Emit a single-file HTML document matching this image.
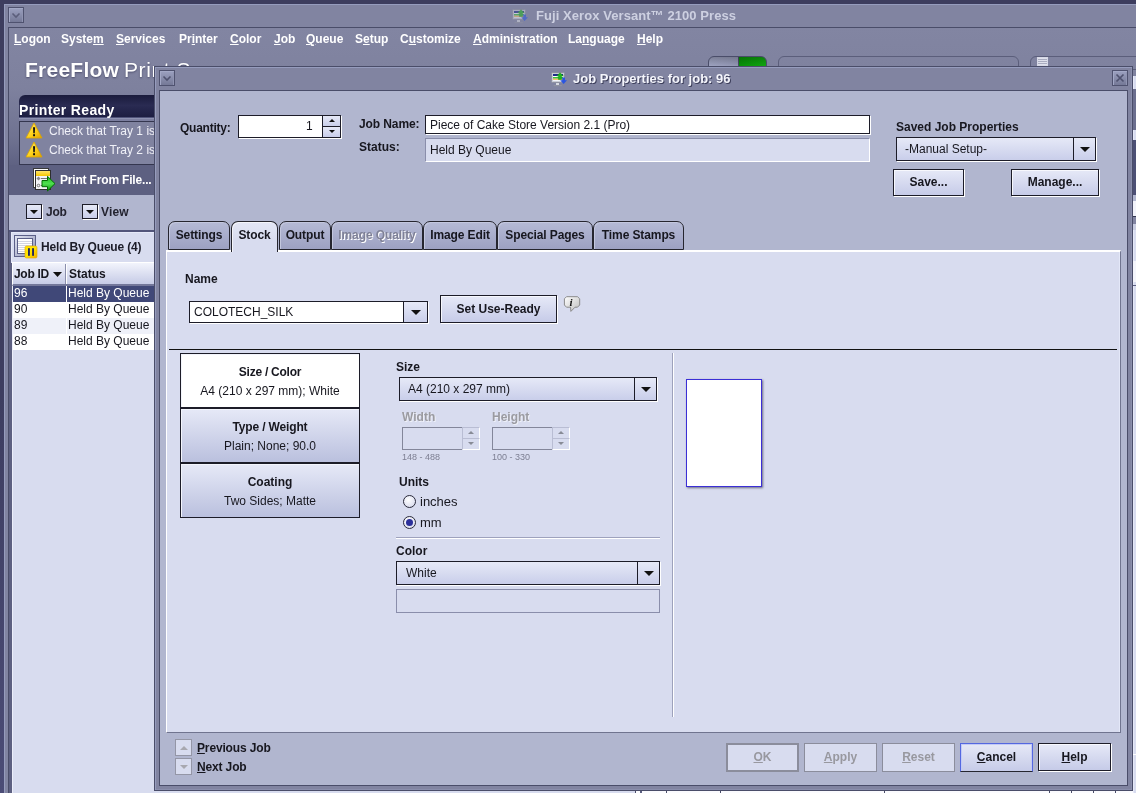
<!DOCTYPE html>
<html>
<head>
<meta charset="utf-8">
<title>Fuji Xerox Versant 2100 Press</title>
<style>
html,body{margin:0;padding:0;}
body{width:1136px;height:793px;overflow:hidden;background:linear-gradient(180deg,#3d3d5e 0,#3d3d60 50%,#4b4c76 100%);position:relative;
  font-family:"Liberation Sans","DejaVu Sans",sans-serif;font-size:12px;color:#17171f;}
#root{position:absolute;left:0;top:0;width:1136px;height:793px;will-change:transform;}
.a{position:absolute;box-sizing:border-box;}
.t{position:absolute;white-space:nowrap;line-height:14px;}
.b{font-weight:bold;}
u{text-decoration:underline;text-underline-offset:1px;}
/* main window */
#main{left:4px;top:4px;width:1140px;height:800px;background:#8184a1;border-left:1px solid #969cbd;border-top:1px solid #969cbd;}
#mainpane{left:8px;top:27px;width:1140px;height:780px;border-left:1px solid #4a4d69;border-top:1px solid #4a4d69;
  background:linear-gradient(180deg,#8285a2 0px,#7e819e 60px,#6f7291 110px,#5d6081 140px);}
.wbtn{width:16px;height:16px;border:1px solid #4f526f;background:linear-gradient(180deg,#9ca1c0,#757997);box-shadow:inset 1px 1px 0 #a3a8c6,inset -1px 0 0 #9094b2;}
.menu{top:32px;color:#fff;font-weight:bold;font-size:12px;}
/* dialog */
#dlg{left:154px;top:66px;width:979px;height:725px;background:#8184a1;border:1px solid #4a4d69;box-shadow:inset 1px 1px 0 #969cbd,inset -1px -1px 0 #8b8fad;}
#dlgpane{left:159px;top:90px;width:969px;height:696px;background:#b1b6cf;border:1px solid #4a4d69;}
#tabpane{left:166px;top:250px;width:955px;height:483px;background:#d8dcef;border-left:1px solid #fff;border-top:2px solid #fff;border-right:1px solid #70748f;border-bottom:1px solid #70748f;box-shadow:inset -1px 0 0 #e4e8f8;}
.lbl{font-weight:bold;font-size:12px;color:#17171f;}
.btn{border:1px solid #1c1c28;background:linear-gradient(180deg,#e6e9f7,#c6cbe8);box-shadow:1px 1px 0 #fff,inset 1px 1px 0 #f7f8fd;
  font-weight:bold;font-size:12px;text-align:center;}
.field{border:1px solid #1c1c28;background:#fff;box-shadow:1px 1px 0 #fff;}
.combo{border:1px solid #1c1c28;background:linear-gradient(180deg,#e6e9f7,#c9ceea);box-shadow:1px 1px 0 #fff;}
.dd{width:16px;height:15px;border:1px solid #1c1c28;background:linear-gradient(180deg,#e6e9f7,#c9ceea);box-shadow:1px 1px 0 #fff;}
.dd:after{content:"";position:absolute;left:3px;top:5px;border-left:4px solid transparent;border-right:4px solid transparent;border-top:4px solid #111;}
.tab{top:221px;height:29px;border:1px solid #26262f;border-radius:7px 7px 0 0;background:linear-gradient(180deg,#b5bad5,#9da1c2);box-shadow:inset 1px 1px 0 #c3c7de;font-weight:bold;font-size:12px;text-align:center;line-height:26px;letter-spacing:-0.1px;}

.c{text-align:center;}
.ro{border:1px solid #8a8eab;border-right-color:#fff;border-bottom-color:#fff;background:#d8dcef;}
.arr{position:absolute;right:0;top:0;bottom:0;border-left:1px solid #1c1c28;background:linear-gradient(180deg,#e6e9f7,#c9ceea);}
.arr:after{content:"";position:absolute;left:50%;top:50%;margin-left:-5px;margin-top:-2px;border-left:5px solid transparent;border-right:5px solid transparent;border-top:5px solid #111;}
.spin{border:1px solid #1c1c28;background:linear-gradient(180deg,#e6e9f7,#c9ceea);}
i.up,i.dn{position:absolute;left:50%;top:50%;margin-left:-3px;margin-top:-2px;border-left:3px solid transparent;border-right:3px solid transparent;}
i.up{border-bottom:3px solid #111;} i.dn{border-top:3px solid #111;}
i.up.g{border-bottom-color:#a8a8b0;margin-left:-4px;border-left-width:4px;border-right-width:4px;border-bottom-width:4px;} i.dn.g{border-top-color:#a8a8b0;margin-left:-4px;border-left-width:4px;border-right-width:4px;border-top-width:4px;}
.tab.sel{height:31px;border-bottom:none;background:linear-gradient(180deg,#e3e6f5,#d8dcef 60%);box-shadow:inset 1px 1px 0 #f4f5fb;}
.tab.dis{color:#7f8197;text-shadow:1px 1px 0 #fff;}
.sbtn{border:1px solid #1c1c28;background:linear-gradient(180deg,#e6e9f7,#bac0de);box-shadow:inset 1px 1px 0 #f3f5fc;}
.dl{color:#9b9ba1;text-shadow:1px 1px 0 #eef0f8;}
.dsp{border:1px solid #b9bdd3;border-right-color:#fff;border-bottom-color:#fff;}
i.g2{opacity:.4;}
.dfield{border:1px solid #8a8eab;border-right-color:#fff;border-bottom-color:#fff;}
.radio{width:13px;height:13px;border-radius:50%;border:1px solid #2a2a3a;background:radial-gradient(circle at 40% 35%,#fff,#d0d4ea);}
.radio.on:after{content:"";position:absolute;left:2px;top:2px;width:7px;height:7px;border-radius:50%;background:#2b2f9a;}
.sm{width:17px;height:17px;border:1px solid #9496a6;background:#d8dcef;}
.dbtn{border:1px solid #8b8d9c;background:#d8dcef;color:#98989f;font-weight:bold;font-size:12px;text-align:center;}
</style>
</head>
<body>
<div id="root">
<!-- MAIN WINDOW -->
<div class="a" id="main"></div>
<div class="a wbtn" style="left:8px;top:7px;"><svg width="14" height="14" style="position:absolute;left:0;top:0"><path d="M3.5 5.5 L7 9 L10.5 5.5" fill="none" stroke="#5b5e7b" stroke-width="1.6"/></svg></div>
<svg class="a" style="left:512px;top:9px;opacity:0.55;" width="17" height="15" viewBox="0 0 17 15"><rect x="0.5" y="0.5" width="13" height="10" rx="1" fill="#c9ccd6" stroke="#8e91a0"/><rect x="2" y="2" width="10" height="2" fill="#1e2a8a"/><rect x="2" y="4" width="10" height="1" fill="#fff"/><rect x="2" y="5" width="10" height="1.6" fill="#36c436"/><rect x="2" y="6.6" width="10" height="1.4" fill="#f5c06a"/><rect x="2" y="8" width="10" height="1" fill="#f2f3f8"/><rect x="5" y="11" width="3" height="2" fill="#d6d8e0"/><rect x="2.5" y="13" width="8.5" height="1.3" rx=".6" fill="#8e91a0"/><path d="M9 0.7 L12.3 4 L10.6 4 L10.6 7.6 L7.4 7.6 L7.4 4 L5.7 4 Z" fill="#1fb41f" stroke="#0e8a0e" stroke-width=".4"/><path d="M11.2 5.5 L14 5.5 L14 8.3 L16 8.3 L12.6 12 L9.2 8.3 L11.2 8.3 Z" fill="#2a55e0"/></svg>
<div class="t b" style="left:536px;top:9px;letter-spacing:0.07px;font-size:13px;color:#cdd0e1;">Fuji Xerox Versant™ 2100 Press</div>
<div class="a" id="mainpane"></div>
<div class="t menu" style="left:14px;"><u>L</u>ogon</div>
<div class="t menu" style="left:61px;">Syste<u>m</u></div>
<div class="t menu" style="left:116px;"><u>S</u>ervices</div>
<div class="t menu" style="left:179px;">Pr<u>i</u>nter</div>
<div class="t menu" style="left:230px;"><u>C</u>olor</div>
<div class="t menu" style="left:274px;"><u>J</u>ob</div>
<div class="t menu" style="left:306px;"><u>Q</u>ueue</div>
<div class="t menu" style="left:355px;">S<u>e</u>tup</div>
<div class="t menu" style="left:400px;">C<u>u</u>stomize</div>
<div class="t menu" style="left:473px;"><u>A</u>dministration</div>
<div class="t menu" style="left:568px;">La<u>n</u>guage</div>
<div class="t menu" style="left:637px;"><u>H</u>elp</div>

<!-- LEFT PANEL -->
<div class="t" id="logo" style="left:25px;top:56px;font-size:21px;line-height:27px;color:#fff;text-shadow:0 1px 2px rgba(40,40,70,.6);font-weight:bold;letter-spacing:0.25px;">FreeFlow</div>
<div class="t" id="logo2" style="left:124px;top:56px;font-size:21px;line-height:27px;color:#fff;text-shadow:0 1px 2px rgba(40,40,70,.6);letter-spacing:0.6px;">Print S</div>
<div class="a" style="left:19px;top:95px;width:140px;height:23px;background:linear-gradient(180deg,#1a1b3c 0,#2a2b52 45%,#23244a 70%,#1c1d40 100%);border-radius:6px 0 0 0;"></div>
<div class="a" style="left:19px;top:117px;width:140px;height:4px;background:#7c7fa0;border-top:1px solid #50537a;box-shadow:inset 0 1px 0 #8d91b0;"></div>
<div class="t b" style="left:19px;top:102px;font-size:14px;line-height:16px;color:#fff;letter-spacing:0.35px;">Printer Ready</div>
<div class="a" style="left:19px;top:121px;width:140px;height:44px;background:#8083a0;border:1px solid #34364f;"></div>
<svg class="a" style="left:25px;top:122px;" width="18" height="17" viewBox="0 0 18 17"><defs><linearGradient id="gw1" x1="0" y1="0" x2="1" y2="1"><stop offset="0" stop-color="#fff07a"/><stop offset=".55" stop-color="#ffd21a"/><stop offset="1" stop-color="#e0a000"/></linearGradient></defs><path d="M9 1 L17 16 L1 16 Z" fill="url(#gw1)" stroke="#d9a400" stroke-width=".8" stroke-linejoin="round"/><path d="M8 5.2h2.1l-.35 6h-1.4z" fill="#111"/><rect x="8.1" y="12.2" width="1.9" height="2" fill="#111"/></svg>
<svg class="a" style="left:25px;top:141px;" width="18" height="17" viewBox="0 0 18 17"><defs><linearGradient id="gw2" x1="0" y1="0" x2="1" y2="1"><stop offset="0" stop-color="#fff07a"/><stop offset=".55" stop-color="#ffd21a"/><stop offset="1" stop-color="#e0a000"/></linearGradient></defs><path d="M9 1 L17 16 L1 16 Z" fill="url(#gw2)" stroke="#d9a400" stroke-width=".8" stroke-linejoin="round"/><path d="M8 5.2h2.1l-.35 6h-1.4z" fill="#111"/><rect x="8.1" y="12.2" width="1.9" height="2" fill="#111"/></svg>
<div class="t" style="left:49px;top:124px;color:#f0f1f8;">Check that Tray 1 is</div>
<div class="t" style="left:49px;top:143px;color:#f0f1f8;">Check that Tray 2 is</div>
<div class="a" style="left:9px;top:165px;width:150px;height:30px;background:#5d6081;"></div>
<svg class="a" style="left:28px;top:166px;" width="30" height="28" viewBox="0 0 30 28"><defs><linearGradient id="gy" x1="0" y1="0" x2="0" y2="1"><stop offset="0" stop-color="#ffe46a"/><stop offset="1" stop-color="#f6c600"/></linearGradient><linearGradient id="gg" x1="0" y1="0" x2="0" y2="1"><stop offset="0" stop-color="#1bb81b"/><stop offset=".5" stop-color="#4fe04f"/><stop offset="1" stop-color="#0a960a"/></linearGradient></defs><rect x="5.5" y="2.5" width="15" height="19" fill="#fff" stroke="#3a3a3a"/><rect x="7.5" y="4.5" width="15" height="19" fill="#f4f4f6" stroke="#2e2e2e"/><rect x="8" y="5" width="14" height="5" fill="url(#gy)"/><rect x="9" y="11" width="3" height="3" fill="#8a8a8a" transform="rotate(45 10.5 12.5)"/><rect x="13" y="12" width="7" height="1" fill="#777"/><circle cx="10.5" cy="19.5" r="1.3" fill="none" stroke="#666" stroke-width=".9"/><rect x="13" y="19" width="3" height="1" fill="#777"/><path d="M14 14.5 L19.5 14.5 L19.5 10.3 L27 17.6 L19.5 25 L19.5 20.7 L14 20.7 Z" fill="url(#gg)" stroke="#056a05" stroke-width="1" stroke-linejoin="round"/></svg>
<div class="t b" style="left:60px;top:173px;color:#fff;letter-spacing:-0.18px;">Print From File...</div>
<div class="a" style="left:9px;top:195px;width:150px;height:35px;background:#b1b6cf;"></div>
<div class="a" style="left:9px;top:230px;width:150px;height:2px;background:#52557a;"></div>
<div class="a" style="left:9px;top:232px;width:3px;height:570px;background:#5d6081;"></div>
<div class="a" style="left:12px;top:263px;width:150px;height:540px;background:#d8dcef;border-left:1px solid #eceefa;"></div>
<div class="a" style="left:11px;top:232px;width:150px;height:31px;background:#d8dcef;border-left:1px solid #e6e9f8;border-top:1px solid #e6e9f8;"></div>
<div class="a dd" style="left:26px;top:204px;"></div>
<div class="a dd" style="left:82px;top:204px;"></div>
<div class="t b" style="left:46px;top:205px;font-size:12px;color:#23232f;letter-spacing:-0.2px;">Job</div>
<div class="t b" style="left:101px;top:205px;font-size:12px;color:#23232f;letter-spacing:0.15px;">View</div>
<svg class="a" style="left:10px;top:232px;" width="30" height="28" viewBox="0 0 30 28"><defs><linearGradient id="gf" x1="0" y1="0" x2="1" y2="1"><stop offset="0" stop-color="#e4e7f3"/><stop offset="1" stop-color="#8b90b3"/></linearGradient><linearGradient id="gp" x1="0" y1="0" x2="1" y2="1"><stop offset="0" stop-color="#ffe300"/><stop offset=".5" stop-color="#ffe300"/><stop offset="1" stop-color="#f0ac00"/></linearGradient></defs><rect x="4.5" y="3.5" width="21" height="21" fill="url(#gf)" stroke="#5c6088"/><rect x="7.5" y="6.5" width="15" height="15" fill="#fff" stroke="#5c6088"/><path d="M8 9.5h14M8 11.5h14M8 13.5h14M8 15.5h14M8 17.5h14M8 19.5h14" stroke="#d3d5e2" stroke-width="1"/><rect x="15" y="14" width="12" height="12" rx="1.5" fill="url(#gp)" stroke="#e8a800" stroke-width=".6"/><rect x="18" y="16.2" width="1.9" height="7.6" fill="#23265e"/><rect x="22.1" y="16.2" width="1.9" height="7.6" fill="#23265e"/></svg>
<div class="t b" style="left:41px;top:240px;color:#1c1c28;letter-spacing:-0.18px;">Held By Queue (4)</div>
<!-- table -->
<div class="a" style="left:12px;top:262px;width:148px;height:24px;background:linear-gradient(180deg,#f2f4fc,#c6cbe6);border-top:1px solid #fff;border-left:1px solid #fff;border-bottom:2px solid #73779a;"></div>
<div class="a" style="left:65px;top:264px;width:2px;height:20px;background:#fff;border-left:1px solid #8a8eab;"></div>
<div class="t b" style="left:14px;top:267px;letter-spacing:-0.3px;">Job ID</div>
<div class="t b" style="left:69px;top:267px;">Status</div>
<svg class="a" style="left:53px;top:272px;" width="10" height="6"><path d="M0 0 L9 0 L4.5 5 Z" fill="#111"/></svg>
<div class="a" style="left:13px;top:286px;width:148px;height:16px;background:#404878;"></div>
<div class="a" style="left:13px;top:302px;width:148px;height:16px;background:#fff;"></div>
<div class="a" style="left:13px;top:318px;width:148px;height:16px;background:#eff1f9;"></div>
<div class="a" style="left:13px;top:334px;width:148px;height:16px;background:#fff;"></div>
<div class="a" style="left:66px;top:286px;width:1px;height:64px;background:#fff;"></div>
<div class="t" style="left:14px;top:286px;color:#fff;">96</div><div class="t" style="left:68px;top:286px;color:#fff;">Held By Queue</div>
<div class="t" style="left:14px;top:302px;">90</div><div class="t" style="left:68px;top:302px;">Held By Queue</div>
<div class="t" style="left:14px;top:318px;">89</div><div class="t" style="left:68px;top:318px;">Held By Queue</div>
<div class="t" style="left:14px;top:334px;">88</div><div class="t" style="left:68px;top:334px;">Held By Queue</div>
<div class="a" style="left:708px;top:56px;width:59px;height:14px;border:1px solid #4a4d69;border-radius:6px 6px 0 0;background:linear-gradient(180deg,rgba(0,0,0,.22),rgba(0,0,0,0) 80%),linear-gradient(90deg,#a0a5c3 0,#9498b6 29px,#4a4d69 29px,#4a4d69 30px,#089408 30px,#10a810 100%);"></div>
<div class="a" style="left:778px;top:56px;width:241px;height:14px;border:1px solid #5b5e7b;border-radius:6px 6px 0 0;"></div>
<div class="a" style="left:1030px;top:56px;width:120px;height:14px;border:1px solid #5b5e7b;border-radius:6px 0 0 0;"></div>
<div class="a" style="left:1037px;top:57px;width:11px;height:9px;background:repeating-linear-gradient(180deg,#dfe1ec 0,#dfe1ec 1px,#a9acc0 1px,#a9acc0 2px);border:1px solid #d6d8e6;"></div>
<!-- peeking main content -->
<div class="a" style="left:155px;top:791px;width:481px;height:4px;background:#d8dcef;"></div>
<div class="a" style="left:636px;top:791px;width:500px;height:4px;background:#fbfbfe;"></div>
<div class="a" style="left:635px;top:791px;width:1px;height:3px;background:#4a4d69;"></div>
<div class="a" style="left:640px;top:791px;width:2px;height:3px;background:#5d6081;"></div>
<div class="a" style="left:666px;top:791px;width:1px;height:2px;background:#4a4d69;"></div>
<div class="a" style="left:720px;top:791px;width:1px;height:2px;background:#4a4d69;"></div>
<div class="a" style="left:884px;top:791px;width:1px;height:2px;background:#4a4d69;"></div>
<div class="a" style="left:1049px;top:791px;width:1px;height:2px;background:#4a4d69;"></div>
<div class="a" style="left:1071px;top:791px;width:1px;height:2px;background:#4a4d69;"></div>
<div class="a" style="left:1093px;top:791px;width:1px;height:2px;background:#4a4d69;"></div>
<div class="a" style="left:1115px;top:791px;width:1px;height:2px;background:#4a4d69;"></div>
<div class="a" style="left:1133px;top:76px;width:3px;height:720px;background:#d8dcef;border-left:1px solid #e6e9f8;"></div>
<div class="a" style="left:1133px;top:89px;width:3px;height:41px;background:#6b6e8e;"></div>
<div class="a" style="left:1133px;top:140px;width:3px;height:55px;background:#4d5075;"></div>
<div class="a" style="left:1133px;top:195px;width:3px;height:6px;background:#b1b6cf;"></div>
<div class="a" style="left:1133px;top:201px;width:3px;height:15px;background:#f2f3fa;"></div>
<div class="a" style="left:1133px;top:216px;width:3px;height:1px;background:#33364f;"></div>
<div class="a" style="left:1133px;top:217px;width:3px;height:7px;background:#8184a1;"></div>
<div class="a" style="left:1133px;top:224px;width:3px;height:6px;background:#c8cce0;"></div>
<div class="a" style="left:1133px;top:261px;width:3px;height:21px;background:#f4f5fb;"></div>
<div class="a" style="left:1133px;top:285px;width:3px;height:1px;background:#5d6081;"></div>
<div class="a" style="left:1133px;top:754px;width:3px;height:1px;background:#fff;"></div>

<!-- DIALOG -->
<div class="a" id="dlg"></div>
<div class="a wbtn" style="left:159px;top:70px;"><svg width="14" height="14" style="position:absolute;left:0;top:0"><path d="M3.5 5.5 L7 9 L10.5 5.5" fill="none" stroke="#4f526f" stroke-width="1.6"/></svg></div>
<div class="a wbtn" style="left:1112px;top:70px;"><svg width="14" height="14" style="position:absolute;left:0;top:0"><path d="M3.5 3.5 L10.5 10.5 M10.5 3.5 L3.5 10.5" fill="none" stroke="#4f526f" stroke-width="1.7"/></svg></div>
<svg class="a" style="left:551px;top:72px;opacity:1;" width="17" height="15" viewBox="0 0 17 15"><rect x="0.5" y="0.5" width="13" height="10" rx="1" fill="#c9ccd6" stroke="#8e91a0"/><rect x="2" y="2" width="10" height="2" fill="#1e2a8a"/><rect x="2" y="4" width="10" height="1" fill="#fff"/><rect x="2" y="5" width="10" height="1.6" fill="#36c436"/><rect x="2" y="6.6" width="10" height="1.4" fill="#f5c06a"/><rect x="2" y="8" width="10" height="1" fill="#f2f3f8"/><rect x="5" y="11" width="3" height="2" fill="#d6d8e0"/><rect x="2.5" y="13" width="8.5" height="1.3" rx=".6" fill="#8e91a0"/><path d="M9 0.7 L12.3 4 L10.6 4 L10.6 7.6 L7.4 7.6 L7.4 4 L5.7 4 Z" fill="#1fb41f" stroke="#0e8a0e" stroke-width=".4"/><path d="M11.2 5.5 L14 5.5 L14 8.3 L16 8.3 L12.6 12 L9.2 8.3 L11.2 8.3 Z" fill="#2a55e0"/></svg>
<div class="t b" style="left:573px;top:72px;font-size:13px;color:#f4f5fb;text-shadow:1px 1px 0 #3c3e5a;">Job Properties for job: 96</div>
<div class="a" id="dlgpane"></div>
<div class="a" id="tabpane"></div>

<!-- top form -->
<div class="t lbl" style="left:180px;top:121px;letter-spacing:-0.25px;">Quantity:</div>
<div class="a field" style="left:238px;top:115px;width:103px;height:23px;"></div>
<div class="t" style="left:306px;top:119px;font-size:12px;">1</div>
<div class="a spin" style="left:322px;top:115px;width:19px;height:12px;"><i class="up"></i></div>
<div class="a spin" style="left:322px;top:126px;width:19px;height:12px;"><i class="dn"></i></div>
<div class="t lbl" style="left:359px;top:117px;letter-spacing:-0.1px;">Job Name:</div>
<div class="t lbl" style="left:359px;top:140px;">Status:</div>
<div class="a field" style="left:425px;top:115px;width:445px;height:19px;"></div>
<div class="t" style="left:430px;top:118px;">Piece of Cake Store Version 2.1 (Pro)</div>
<div class="a ro" style="left:425px;top:138px;width:445px;height:24px;"></div>
<div class="t" style="left:430px;top:143px;">Held By Queue</div>
<div class="t lbl" style="left:896px;top:120px;">Saved Job Properties</div>
<div class="a combo" style="left:896px;top:137px;width:200px;height:24px;"><b class="arr" style="width:21px;"></b></div>
<div class="t" style="left:905px;top:142px;">-Manual Setup-</div>
<div class="a btn" style="left:893px;top:169px;width:71px;height:27px;line-height:24px;">Save...</div>
<div class="a btn" style="left:1011px;top:169px;width:88px;height:27px;line-height:24px;">Manage...</div>
<!-- tabs -->
<div class="a tab" style="left:168px;width:62px;">Settings</div>
<div class="a tab" style="left:279px;width:52px;">Output</div>
<div class="a tab dis" style="left:331px;width:92px;">Image Quality</div>
<div class="a tab" style="left:423px;width:74px;">Image Edit</div>
<div class="a tab" style="left:497px;width:96px;">Special Pages</div>
<div class="a tab" style="left:593px;width:91px;">Time Stamps</div>
<div class="a tab sel" style="left:231px;width:47px;">Stock</div>
<!-- stock name -->
<div class="t lbl" style="left:185px;top:272px;">Name</div>
<div class="a field" style="left:189px;top:301px;width:239px;height:22px;"><b class="arr" style="width:23px;"></b></div>
<div class="t" style="left:194px;top:305px;">COLOTECH_SILK</div>
<div class="a btn" style="left:440px;top:295px;width:117px;height:28px;line-height:26px;">Set Use-Ready</div>
<svg class="a" style="left:556px;top:290px;" width="30" height="26" viewBox="0 0 30 26"><defs><linearGradient id="gi" x1="0" y1="0" x2="1" y2="1"><stop offset="0" stop-color="#ffffff"/><stop offset="1" stop-color="#bdbdbd"/></linearGradient></defs><path d="M10.5 6.7 L21.5 6.7 L23.7 8.8 L23.7 15 L21.5 17.2 L19 17.2 L14.9 21.4 L14.5 17.2 L10.5 17.2 L8.4 15 L8.4 8.8 Z" fill="url(#gi)" stroke="#8a8a8a" stroke-width="1"/><text x="13.6" y="15.6" font-family="Liberation Serif,serif" font-style="italic" font-weight="bold" font-size="11" fill="#111">i</text></svg>
<div class="a" style="left:169px;top:349px;width:948px;height:1px;background:#111;"></div>
<!-- left buttons -->
<div class="a sbtn" style="left:180px;top:353px;width:180px;height:55px;background:#fff;"></div>
<div class="a sbtn" style="left:180px;top:408px;width:180px;height:55px;"></div>
<div class="a sbtn" style="left:180px;top:463px;width:180px;height:55px;"></div>
<div class="t lbl c" style="left:180px;width:180px;top:365px;letter-spacing:-0.25px;">Size / Color</div>
<div class="t c" style="left:180px;width:180px;top:384px;">A4 (210 x 297 mm); White</div>
<div class="t lbl c" style="left:180px;width:180px;top:420px;letter-spacing:-0.15px;">Type / Weight</div>
<div class="t c" style="left:180px;width:180px;top:439px;">Plain; None; 90.0</div>
<div class="t lbl c" style="left:180px;width:180px;top:475px;">Coating</div>
<div class="t c" style="left:180px;width:180px;top:494px;">Two Sides; Matte</div>
<!-- size form -->
<div class="t lbl" style="left:396px;top:360px;">Size</div>
<div class="a combo" style="left:399px;top:377px;width:258px;height:24px;"><b class="arr" style="width:21px;"></b></div>
<div class="t" style="left:408px;top:382px;">A4 (210 x 297 mm)</div>
<div class="t lbl dl" style="left:402px;top:410px;">Width</div>
<div class="t lbl dl" style="left:492px;top:410px;">Height</div>
<div class="a" style="left:402px;top:427px;width:61px;height:23px;border:1px solid #83869a;"></div><div class="a dsp" style="left:462px;top:427px;width:18px;height:12px;"><i class="up g2"></i></div><div class="a dsp" style="left:462px;top:438px;width:18px;height:12px;"><i class="dn g2"></i></div>
<div class="a" style="left:492px;top:427px;width:61px;height:23px;border:1px solid #83869a;"></div><div class="a dsp" style="left:552px;top:427px;width:18px;height:12px;"><i class="up g2"></i></div><div class="a dsp" style="left:552px;top:438px;width:18px;height:12px;"><i class="dn g2"></i></div>
<div class="t" style="left:402px;top:450px;font-size:9px;color:#7d7f92;">148 - 488</div>
<div class="t" style="left:492px;top:450px;font-size:9px;color:#7d7f92;">100 - 330</div>
<div class="t lbl" style="left:399px;top:475px;">Units</div>
<div class="a radio" style="left:403px;top:495px;"></div>
<div class="a radio on" style="left:403px;top:516px;"></div>
<div class="t" style="left:420px;top:495px;font-size:13px;">inches</div>
<div class="t" style="left:420px;top:516px;font-size:13px;">mm</div>
<div class="a" style="left:396px;top:537px;width:264px;height:2px;background:#9ea2bd;border-bottom:1px solid #fff;"></div>
<div class="t lbl" style="left:396px;top:544px;">Color</div>
<div class="a combo" style="left:396px;top:561px;width:264px;height:24px;"><b class="arr" style="width:21px;"></b></div>
<div class="t" style="left:406px;top:566px;">White</div>
<div class="a" style="left:396px;top:589px;width:264px;height:24px;border:1px solid #8a8eab;"></div>
<div class="a" style="left:672px;top:353px;width:2px;height:364px;background:#fff;border-left:1px solid #9da1bb;"></div>
<div class="a" style="left:686px;top:379px;width:76px;height:108px;background:#fff;border:1px solid #3b2fd6;box-shadow:1px 1px 2px rgba(60,60,90,.7);"></div>
<!-- bottom -->
<div class="a sm" style="left:175px;top:739px;"><i class="up g"></i></div>
<div class="a sm" style="left:175px;top:758px;"><i class="dn g"></i></div>
<div class="t lbl" style="left:197px;top:741px;letter-spacing:-0.15px;"><u>P</u>revious Job</div>
<div class="t lbl" style="left:197px;top:760px;letter-spacing:-0.15px;"><u>N</u>ext Job</div>
<div class="a dbtn" style="left:726px;top:743px;width:73px;height:29px;border:2px solid #8b8d9c;line-height:24px;"><u>O</u>K</div>
<div class="a dbtn" style="left:804px;top:743px;width:73px;height:29px;line-height:26px;"><u>A</u>pply</div>
<div class="a dbtn" style="left:882px;top:743px;width:73px;height:29px;line-height:26px;"><u>R</u>eset</div>
<div class="a btn" style="left:960px;top:743px;width:73px;height:29px;line-height:26px;border-color:#5468e0 #5468e0 #26262f #5468e0;box-shadow:inset 1px 1px 0 #c3caf6,inset -1px 0 0 #c3caf6;"><u>C</u>ancel</div>
<div class="a btn" style="left:1038px;top:743px;width:73px;height:28px;line-height:26px;"><u>H</u>elp</div>
</div>
</body>
</html>
